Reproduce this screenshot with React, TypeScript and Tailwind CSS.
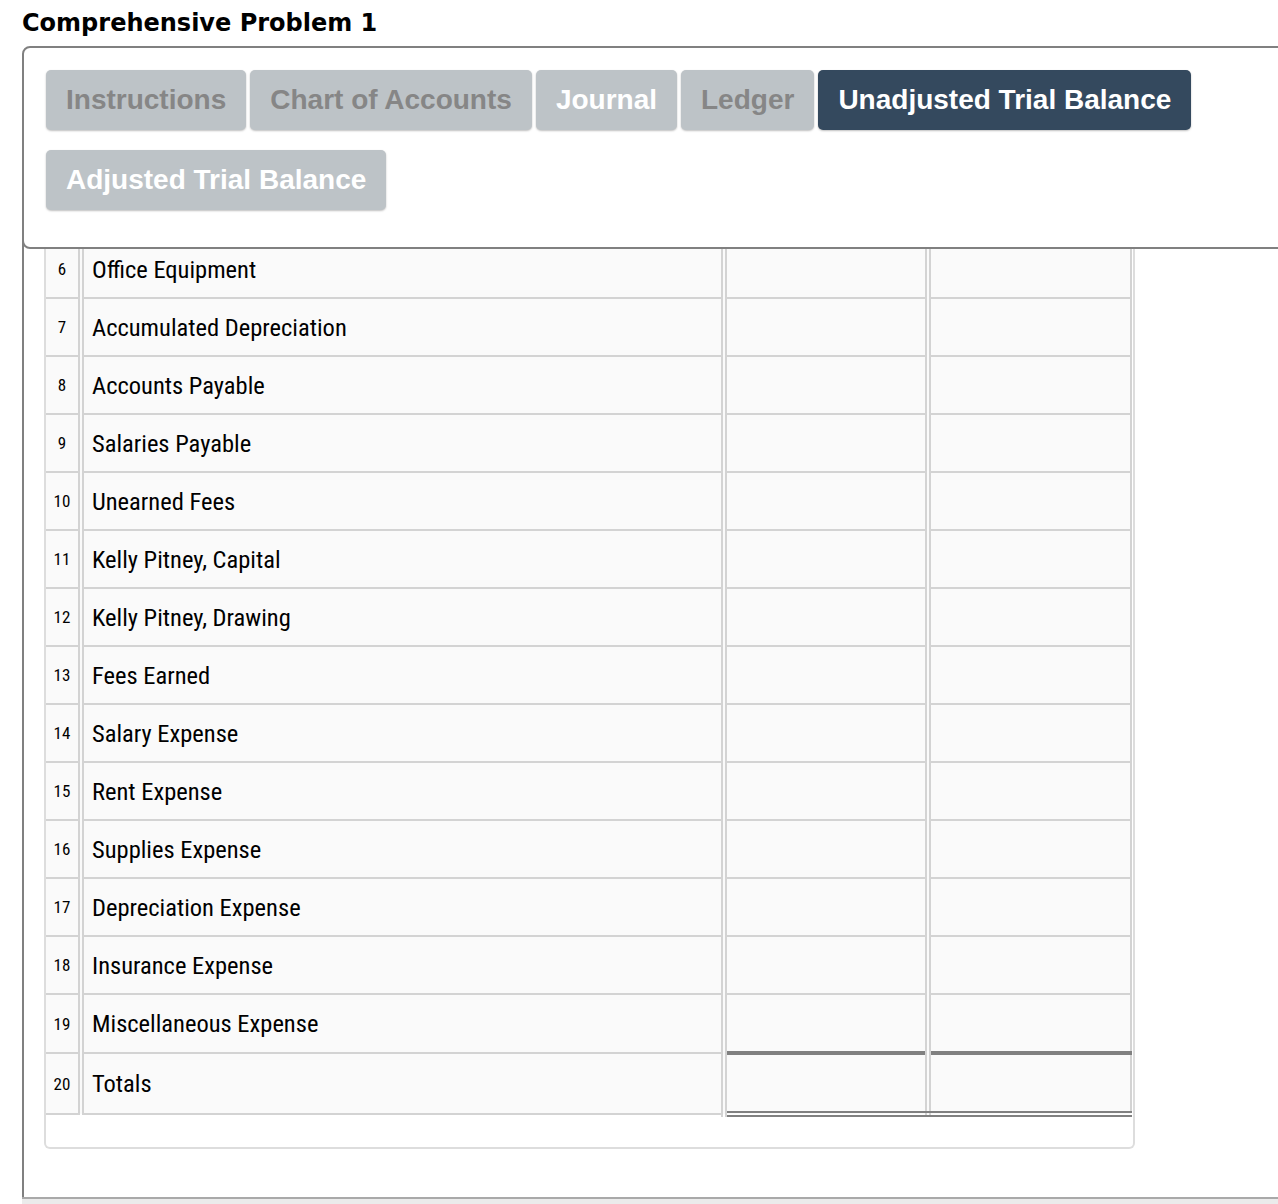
import React from "react";

const rows: [number, string][] = [
  [6, "Office Equipment"],
  [7, "Accumulated Depreciation"],
  [8, "Accounts Payable"],
  [9, "Salaries Payable"],
  [10, "Unearned Fees"],
  [11, "Kelly Pitney, Capital"],
  [12, "Kelly Pitney, Drawing"],
  [13, "Fees Earned"],
  [14, "Salary Expense"],
  [15, "Rent Expense"],
  [16, "Supplies Expense"],
  [17, "Depreciation Expense"],
  [18, "Insurance Expense"],
  [19, "Miscellaneous Expense"],
  [20, "Totals"],
];

const tabs = [
  { label: "Instructions", kind: "grey" },
  { label: "Chart of Accounts", kind: "grey" },
  { label: "Journal", kind: "white" },
  { label: "Ledger", kind: "grey" },
  { label: "Unadjusted Trial Balance", kind: "active" },
  { label: "Adjusted Trial Balance", kind: "white" },
];

function Tab({ label, kind }: { label: string; kind: string }) {
  const color =
    kind === "active"
      ? "bg-[#34495e] text-white"
      : kind === "white"
      ? "bg-[#bdc3c7] text-white"
      : "bg-[#bdc3c7] text-[#868686]";
  return (
    <div
      className={`h-[60px] px-[20px] rounded-[5px] flex items-center text-[28px] font-bold font-['Liberation_Sans',Arial,sans-serif] whitespace-nowrap shadow-[0_1px_2px_rgba(0,0,0,0.25)] ${color}`}
    >
      {label}
    </div>
  );
}

export default function App() {
  return (
    <div className="relative w-[1278px] h-[1204px] overflow-hidden bg-white text-black">
      <div className="px-[22px] pt-[9px]">
        <h1 className="font-['DejaVu_Sans',Verdana,sans-serif] font-bold text-[24px] leading-[28px]">
          Comprehensive Problem 1
        </h1>
      </div>
      <div className="mt-[9px] ml-[22px]">
        <div className="relative z-10 w-[1300px] bg-white border-2 border-[#808080] rounded-l-[8px] pt-[22px] pl-[22px] pb-[37px]">
          <div className="flex flex-wrap gap-x-[4px] gap-y-[20px]">
            {tabs.map((t) => (
              <Tab key={t.label} label={t.label} kind={t.kind} />
            ))}
          </div>
        </div>
        <div className="-mt-[8px] border-l-2 border-[#808080] pl-[20px] pb-[48px]">
          <div className="w-[1091px] border-l-2 border-r-2 border-b-2 border-[#dddddd] rounded-b-[6px] pr-[2px] pb-[30px]">
            <table className="w-[1085px] table-fixed border-collapse">
              <colgroup>
                <col className="w-[35px]" />
                <col className="w-[643px]" />
                <col className="w-[204px]" />
                <col className="w-[203px]" />
              </colgroup>
              <tbody>
                {rows.map(([n, name]) => {
                  const isLastAcct = n === 19;
                  const isTotal = n === 20;
                  const amt = isLastAcct
                    ? "border-b-4 border-b-[#808080] [border-bottom-style:solid]"
                    : isTotal
                    ? "border-b-[6px] border-b-[#808080] [border-bottom-style:double]"
                    : "border-b-2 border-b-[#d3d3d3] [border-bottom-style:solid]";
                  return (
                    <tr key={n} className="bg-[#fafafa]">
                      <td className="p-0 border-b-2 border-r-[6px] border-[#d3d3d3] [border-bottom-style:solid] [border-right-style:double]">
                        <div className="h-[56px] pt-[2px] flex items-center justify-center text-[17px] font-['Roboto',sans-serif] [font-stretch:condensed]">
                          {n}
                        </div>
                      </td>
                      <td className="p-0 border-b-2 border-r-[6px] border-[#d3d3d3] [border-bottom-style:solid] [border-right-style:double]">
                        <div className="h-[56px] pt-[2px] flex items-center pl-[8px] text-[24.5px] font-['Roboto',sans-serif] [font-stretch:condensed]">
                          {name}
                        </div>
                      </td>
                      <td className={`p-0 border-r-[6px] border-r-[#d3d3d3] [border-right-style:double] ${amt}`}>
                        <div className="h-[56px]" />
                      </td>
                      <td className={`p-0 border-r-2 border-r-[#d3d3d3] [border-right-style:solid] ${amt}`}>
                        <div className="h-[56px]" />
                      </td>
                    </tr>
                  );
                })}
              </tbody>
            </table>
          </div>
        </div>
        <div className="h-[20px] border-t-2 border-[#a9a9a9] bg-[#ebebeb]" />
      </div>
    </div>
  );
}
